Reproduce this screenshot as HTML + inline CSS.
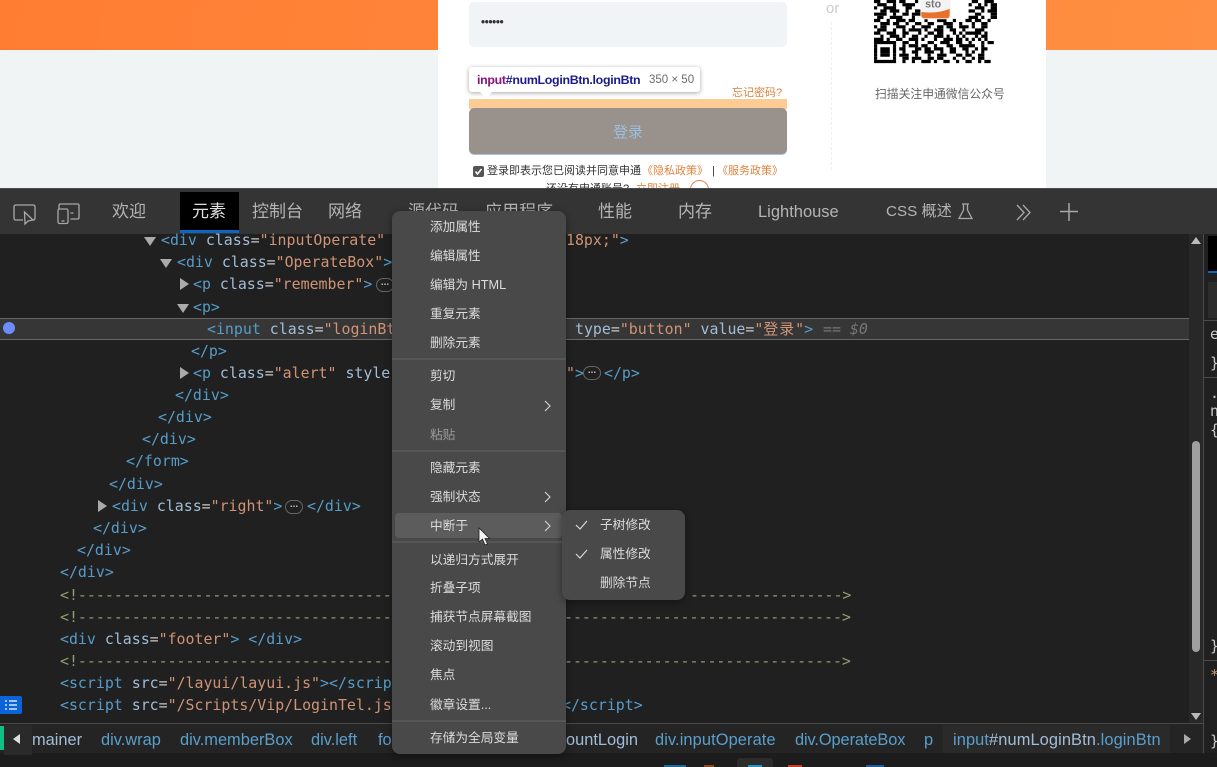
<!DOCTYPE html>
<html><head><meta charset="utf-8">
<style>
html,body{margin:0;padding:0}
body{width:1217px;height:767px;overflow:hidden;position:relative;background:#f1f4f5;font-family:"Liberation Sans","Noto Sans CJK SC",sans-serif}
div,span.a{box-sizing:border-box}
.p{position:absolute;white-space:nowrap}
.r{position:absolute;white-space:pre;font-family:"DejaVu Sans Mono",monospace;font-size:14.9px;line-height:22px;color:#579cc9;height:22px}
.n{color:#a2bdd8}.v{color:#cf9476}.c{color:#8e9e72}.g{color:#c8c8c8}
.t{position:absolute;top:199px;font-size:17px;line-height:26px;color:#b4b4b4;white-space:nowrap}
.m{position:absolute;left:430px;font-size:12.7px;line-height:20px;color:#dcdcdc;white-space:nowrap;margin-top:1px}
.s{position:absolute;left:600px;font-size:12.7px;line-height:20px;color:#dcdcdc;white-space:nowrap;margin-top:1px}
.b{position:absolute;top:728px;font-size:16.4px;line-height:24px;color:#5a9fcc;white-space:nowrap}
.sep{position:absolute;left:392px;width:174px;height:2px;background:#565656}
.ad{position:absolute;width:0;height:0}
.dn{border-left:6px solid transparent;border-right:6px solid transparent;border-top:9px solid #aaa}
.rt{border-top:6px solid transparent;border-bottom:6px solid transparent;border-left:9px solid #aaa}
.dots{position:absolute;width:18px;height:14px;border:1px solid #666;border-radius:7px;color:#bbb;font:bold 10px/8px "Liberation Sans",sans-serif;text-align:center;letter-spacing:0}
</style></head><body>

<!-- page -->
<div class="p" style="left:0;top:0;width:1217px;height:50px;background:linear-gradient(100deg,#ff7d33,#ff8f42)"></div>
<div class="p" style="left:438px;top:0;width:608px;height:190px;background:#fff"></div>
<div class="p" style="left:469px;top:2px;width:318px;height:45px;background:#f1f4f6;border-radius:5px"></div>
<div class="p" style="left:481px;top:17px;font-size:11.500px;line-height:13px;color:#333;font-weight:bold;letter-spacing:-.3px">••••••</div>
<div class="p" style="left:826px;top:0;font-size:15px;line-height:17px;color:#ccc">or</div>
<div class="p" style="left:831px;top:22px;width:1px;height:148px;border-left:1px dashed #efefef"></div>

<svg class="p" style="left:874px;top:0" width="123" height="64" viewBox="0 0 39 20.3">
<g stroke="#000" stroke-width="1.02" fill="none">
<path d="M0 .5h2m2 0h3m1 0h2m3 0h1m1 0h1M31 .5h2m2 0h3"/>
<path d="M1 1.5h3m2 0h1m2 0h4m2 0h1M30 1.5h1m2 0h1m1 0h1m1 0h2"/>
<path d="M0 2.5h1m2 0h4m3 0h2m3 0h1M32 2.5h3m2 0h2"/>
<path d="M2 3.5h2m1 0h3m2 0h1m2 0h3M30 3.5h2m2 0h1m1 0h3"/>
<path d="M0 4.5h4m2 0h1m2 0h2m1 0h3m1 0h1m15 0h2m3 0h2"/>
<path d="M1 5.5h2m2 0h4m3 0h1m3 0h2m3 0h1M30 5.5h3m1 0h1m2 0h2"/>
<path d="M0 6.5h2m2 0h1m2 0h3m1 0h2m3 0h1m3 0h3m2 0h1m3 0h2m1 0h2m2 0h1"/>
<path d="M2 7.5h3m1 0h2m2 0h1m2 0h2m2 0h2m3 0h3m2 0h1m3 0h1m2 0h2"/>
<path d="M0 8.5h1m1 0h2m3 0h3m2 0h1m2 0h3m2 0h2m1 0h2m2 0h3m1 0h1m2 0h2"/>
<path d="M1 9.5h3m2 0h1m2 0h1m1 0h4m1 0h1m2 0h3m2 0h2m2 0h1m3 0h3"/>
<path d="M0 10.5h2m2 0h3m2 0h2m3 0h1m2 0h2m1 0h2m3 0h1m1 0h1m1 0h5m1 0h1"/>
<path d="M2 11.5h1m2 0h3m1 0h1m2 0h2m2 0h1m2 0h3m1 0h1m2 0h1m1 0h1m3 0h1m1 0h2"/>
<path d="M0 12.5h3m1 0h1m2 0h2m2 0h3m1 0h1m3 0h1m2 0h3m1 0h2m1 0h1m1 0h1m1 0h1m1 0h1"/>
<path d="M0 13.5h7m2 0h2m2 0h1m3 0h2m2 0h3m2 0h2m2 0h1m3 0h1m1 0h2"/>
<path d="M0 14.5h1m5 0h1m2 0h1m1 0h3m1 0h2m2 0h1m3 0h2m2 0h5m2 0h1"/>
<path d="M0 15.5h1m1 0h3m1 0h1m1 0h2m3 0h2m1 0h2m1 0h3m2 0h2m2 0h2m2 0h1m1 0h2"/>
<path d="M0 16.5h1m1 0h3m1 0h1m2 0h1m2 0h2m2 0h3m2 0h1m2 0h2m3 0h1m1 0h1m2 0h1"/>
<path d="M0 17.5h1m1 0h3m1 0h1m1 0h3m2 0h1m3 0h1m2 0h3m3 0h2m1 0h2m2 0h2"/>
<path d="M0 18.5h1m5 0h1m2 0h2m1 0h3m2 0h2m1 0h2m3 0h1m2 0h1m2 0h1m1 0h2"/>
<path d="M0 19.5h7m2 0h1m2 0h1m2 0h3m1 0h1m2 0h2m2 0h1m2 0h2m2 0h1m1 0h2"/>
</g>
<path d="M14.700 0h9.600v4.800q0 1.300-1.300 1.300h-7q-1.300 0-1.300-1.300z" fill="#f4f4f4"/>
<path d="M15 3.800q5 .6 9-1v1.900q0 1.100-1.100 1.100h-6.800q-1.100 0-1.100-1.100z" fill="#e8722c"/>
<text x="16.200" y="2.300" font-family="Liberation Sans" font-weight="bold" font-size="3.400" fill="#777">sto</text>
</svg>
<div class="p" style="left:875px;top:86px;font-size:11.800px;line-height:17px;color:#666">扫描关注申通微信公众号</div>

<!-- highlight -->
<div class="p" style="left:469px;top:99px;width:318px;height:10px;background:#fdcb94"></div>
<div class="p" style="left:469px;top:108px;width:318px;height:46px;background:#98918c;border-radius:5px;box-shadow:0 1px 0 #a6c4e8"></div>
<div class="p" style="left:613px;top:122px;font-size:15px;line-height:21px;color:#9dbfe0">登录</div>
<div class="p" style="left:469px;top:67px;width:231px;height:25px;background:#fff;border-radius:3px;box-shadow:0 1px 5px rgba(0,0,0,.35)"></div>
<div class="p" style="left:480px;top:92px;width:0;height:0;border-left:6px solid transparent;border-right:6px solid transparent;border-top:7px solid #fff"></div>
<div class="p" style="left:477px;top:71px;font-size:12.400px;line-height:18px;font-weight:bold;color:#1a1a8c;letter-spacing:-.31px"><span style="color:#881280">input</span>#numLoginBtn.loginBtn</div>
<div class="p" style="left:649px;top:71px;font-size:11.500px;line-height:18px;color:#6b6b6b">350 × 50</div>
<div class="p" style="left:732px;top:85px;font-size:11px;line-height:16px;color:#d9823f">忘记密码?</div>
<div class="p" style="left:473px;top:166px;width:11px;height:11px;background:#555;border-radius:2px"></div>
<svg class="p" style="left:473px;top:166px" width="11" height="11"><path d="M2.500 5.500l2 2.500 4-5" stroke="#fff" stroke-width="1.600" fill="none"/></svg>
<div class="p" style="left:487px;top:163px;font-size:11px;line-height:17px;color:#333">登录即表示您已阅读并同意申通</div>
<div class="p" style="left:642px;top:163px;font-size:11px;line-height:17px;color:#e0833f">《隐私政策》</div>
<div class="p" style="left:712px;top:163px;font-size:11px;line-height:17px;color:#333">|</div>
<div class="p" style="left:717px;top:163px;font-size:11px;line-height:17px;color:#e0833f">《服务政策》</div>
<div class="p" style="left:546px;top:181px;font-size:11px;line-height:17px;color:#333">还没有申通账号?</div>
<div class="p" style="left:636px;top:181px;font-size:11px;line-height:17px;color:#e0833f">立即注册</div>
<div class="p" style="left:690px;top:180px;width:19px;height:19px;border:1.500px solid #e0833f;border-radius:50%"></div>

<!-- devtools -->
<div class="p" style="left:0;top:188px;width:1217px;height:579px;background:#202020"></div>
<div class="p" style="left:0;top:188px;width:1217px;height:46px;background:#343434;border-top:1.500px solid #4a4a4a"></div>
<svg class="p" style="left:12px;top:202px" width="70" height="24" fill="none" stroke="#a8a8a8" stroke-width="1.300">
<path d="M11 18H4q-2 0-2-2V5q0-2 2-2h17q2 0 2 2v11q0 2-2 2h-1"/>
<path d="M12.500 10l.5 12 3-3 5-1z"/>
<path d="M47 7V3.500Q47 2 48.500 2h17Q67 2 67 3.500V15.500Q67 17 65.500 17h-7"/>
<rect x="46" y="7" width="10" height="14.500" rx="1.500"/>
<path d="M49.500 19h3M58.500 11h3"/>
</svg>
<div class="p" style="left:180px;top:192px;width:59px;height:39px;background:#000"></div>
<div class="p" style="left:180px;top:230px;width:59px;height:3px;background:#0a67c4"></div>
<div class="t" style="left:112px">欢迎</div>
<div class="t" style="left:192px;color:#e0e0e0">元素</div>
<div class="t" style="left:252px">控制台</div>
<div class="t" style="left:328px">网络</div>
<div class="t" style="left:408px">源代码</div>
<div class="t" style="left:485px">应用程序</div>
<div class="t" style="left:598px">性能</div>
<div class="t" style="left:678px">内存</div>
<div class="t" style="left:758px;font-size:16.500px">Lighthouse</div>
<div class="t" style="left:886px;font-size:15.200px">CSS 概述</div>
<svg class="p" style="left:956px;top:202px" width="140" height="20" fill="none" stroke="#a8a8a8" stroke-width="1.300">
<path d="M6 2h7M7.500 2v6L3 16.500h13L11.500 8V2"/>
<path d="M61 3l7 7.500-7 7.500M67 3l7 7.500-7 7.500"/>
<path d="M104 9.500h18M113 1v18" stroke-width="1.500"/>
</svg>

<!-- selected row -->
<div class="p" style="left:0;top:318px;width:1189px;height:22px;background:#363636;border-top:1px solid #666;border-bottom:1.500px solid #666"></div>
<div class="p" style="left:3px;top:322px;width:12px;height:12px;border-radius:50%;background:#6b8cff"></div>

<!-- code -->
<div class="ad dn" style="left:144px;top:237px"></div>
<div class="r" style="left:161px;top:229px">&lt;div <span class="n">class</span><span class="g">=</span><span class="v">"inputOperate"</span></div>
<div class="ad dn" style="left:160px;top:259px"></div>
<div class="r" style="left:177px;top:251px">&lt;div <span class="n">class</span><span class="g">=</span><span class="v">"OperateBox"</span>&gt;</div>
<div class="ad rt" style="left:180px;top:278px"></div>
<div class="r" style="left:193px;top:273px">&lt;p <span class="n">class</span><span class="g">=</span><span class="v">"remember"</span>&gt;</div>
<div class="dots" style="left:376px;top:278px">...</div>
<div class="ad dn" style="left:177px;top:304px"></div>
<div class="r" style="left:193px;top:296px">&lt;p&gt;</div>
<div class="r" style="left:207px;top:318px">&lt;input <span class="n">class</span><span class="g">=</span><span class="v">"loginBtn"</span></div>
<div class="r" style="left:191px;top:340px">&lt;/p&gt;</div>
<div class="ad rt" style="left:180px;top:367px"></div>
<div class="r" style="left:193px;top:362px">&lt;p <span class="n">class</span><span class="g">=</span><span class="v">"alert"</span> <span class="n">style</span></div>
<div class="r" style="left:175px;top:384px">&lt;/div&gt;</div>
<div class="r" style="left:158px;top:406px">&lt;/div&gt;</div>
<div class="r" style="left:142px;top:428px">&lt;/div&gt;</div>
<div class="r" style="left:126px;top:450px">&lt;/form&gt;</div>
<div class="r" style="left:109px;top:473px">&lt;/div&gt;</div>
<div class="ad rt" style="left:98px;top:500px"></div>
<div class="r" style="left:112px;top:495px">&lt;div <span class="n">class</span><span class="g">=</span><span class="v">"right"</span>&gt;</div>
<div class="dots" style="left:285px;top:500px">...</div>
<div class="r" style="left:307px;top:495px">&lt;/div&gt;</div>
<div class="r" style="left:93px;top:517px">&lt;/div&gt;</div>
<div class="r" style="left:77px;top:539px">&lt;/div&gt;</div>
<div class="r" style="left:60px;top:561px">&lt;/div&gt;</div>
<div class="r c" style="left:60px;top:584px;color:#8e9e72">&lt;!-----------------------------------</div>
<div class="r c" style="left:60px;top:606px;color:#8e9e72">&lt;!-----------------------------------</div>
<div class="r" style="left:60px;top:628px">&lt;div <span class="n">class</span><span class="g">=</span><span class="v">"footer"</span>&gt; &lt;/div&gt;</div>
<div class="r c" style="left:60px;top:650px;color:#8e9e72">&lt;!-----------------------------------</div>
<div class="r" style="left:60px;top:672px">&lt;script <span class="n">src</span><span class="g">=</span><span class="v">"/layui/layui.js"</span>&gt;&lt;/script&gt;</div>
<div class="r" style="left:60px;top:694px">&lt;script <span class="n">src</span><span class="g">=</span><span class="v">"/Scripts/Vip/LoginTel.js"</span></div>

<!-- code right of menu -->
<div class="r" style="left:566px;top:229px"><span class="v">18px;</span><span class="v">"</span>&gt;</div>
<div class="r" style="left:575px;top:318px"><span class="n">type</span><span class="g">=</span><span class="v">"button"</span> <span class="n">value</span><span class="g">=</span><span class="v">"<span style="letter-spacing:1px">登录</span>"</span>&gt;</div>
<div class="r" style="left:823px;top:318px;color:#777;font-style:italic">== $0</div>
<div class="r" style="left:566px;top:362px"><span class="v">"</span>&gt;</div>
<div class="dots" style="left:583px;top:366px">...</div>
<div class="r" style="left:604px;top:362px">&lt;/p&gt;</div>
<div class="r c" style="left:690px;top:584px;color:#8e9e72">-----------------&gt;</div>
<div class="r c" style="left:564px;top:606px;color:#8e9e72">-------------------------------&gt;</div>
<div class="r c" style="left:564px;top:650px;color:#8e9e72">-------------------------------&gt;</div>
<div class="r" style="left:562px;top:694px">&lt;/script&gt;</div>

<!-- scrollbar + right pane -->
<div class="p" style="left:1189px;top:234px;width:14px;height:489px;background:#282828"></div>
<div class="p" style="left:1191px;top:237px;width:0;height:0;border-left:5px solid transparent;border-right:5px solid transparent;border-bottom:7px solid #bbb"></div>
<div class="p" style="left:1191px;top:713px;width:0;height:0;border-left:5px solid transparent;border-right:5px solid transparent;border-top:7px solid #bbb"></div>
<div class="p" style="left:1192px;top:441px;width:8px;height:211px;background:#a0a0a0;border-radius:4px"></div>
<div class="p" style="left:1203px;top:234px;width:1px;height:519px;background:#4a4a4a"></div>
<div class="p" style="left:1208px;top:236px;width:9px;height:37px;background:#000;border-bottom:2px solid #0a67c4"></div>
<div class="p" style="left:1208px;top:282px;width:9px;height:36px;background:#2c2c2c"></div>
<div class="p" style="left:1204px;top:320px;width:13px;height:1px;background:#4c4c4c"></div>
<div class="p" style="left:1204px;top:377px;width:13px;height:1px;background:#4c4c4c"></div>
<div class="p" style="left:1204px;top:660px;width:13px;height:1px;background:#4c4c4c"></div>
<div class="r" style="left:1210px;top:323px;color:#c8c8c8">e</div>
<div class="r" style="left:1210px;top:352px;color:#c8c8c8">}</div>
<div class="r" style="left:1210px;top:382px;color:#c8c8c8">.</div>
<div class="r" style="left:1210px;top:400px;color:#c8c8c8">n</div>
<div class="r" style="left:1210px;top:419px;color:#c8c8c8">{</div>
<div class="r" style="left:1210px;top:635px;color:#c8c8c8">}</div>
<div class="r" style="left:1210px;top:664px;color:#c8a070">*</div>
<div class="r" style="left:1210px;top:730px;color:#c8c8c8">}</div>

<!-- breadcrumb -->
<div class="p" style="left:0;top:723px;width:1203px;height:30px;background:#242424;border-top:1.500px solid #4a4a4a"></div>
<div class="p" style="left:0;top:753px;width:1217px;height:14px;background:#1c1c1c"></div>
<div class="p" style="left:0;top:696px;width:22px;height:18px;background:#0a63d8;border-radius:0 2px 2px 0"></div>
<svg class="p" style="left:3px;top:699px" width="16" height="12" stroke="#fff" stroke-width="1.200"><path d="M2 2h2M6 2h8M2 6h2M6 6h8M2 10h2M6 10h8"/></svg>
<div class="p" style="left:0;top:726px;width:4px;height:24px;background:#0fc184"></div>
<div class="p" style="left:4px;top:725px;width:28px;height:30px;background:#2a2a2a"></div>
<div class="p" style="left:13px;top:734px;width:0;height:0;border-top:5px solid transparent;border-bottom:5px solid transparent;border-right:7px solid #ddd"></div>
<div class="b" style="left:32px;color:#a2bdd8">mainer</div>
<div class="b" style="left:101px">div.wrap</div>
<div class="b" style="left:180px">div.memberBox</div>
<div class="b" style="left:311px">div.left</div>
<div class="b" style="left:378px">fo</div>
<div class="b" style="left:566px;color:#a2bdd8">ountLogin</div>
<div class="b" style="left:655px;letter-spacing:.1px">div.inputOperate</div>
<div class="b" style="left:795px;letter-spacing:-.1px">div.OperateBox</div>
<div class="b" style="left:924px">p</div>
<div class="p" style="left:943px;top:725px;width:227px;height:28px;background:#2a2a2a"></div>
<div class="b" style="left:953px;letter-spacing:.1px">input<span style="color:#a2bdd8">#numLoginBtn</span>.loginBtn</div>
<div class="p" style="left:1184px;top:734px;width:0;height:0;border-top:5px solid transparent;border-bottom:5px solid transparent;border-left:7px solid #aaa"></div>

<!-- taskbar hints -->
<div class="p" style="left:737px;top:758px;width:36px;height:9px;background:#2c2c2c;border-radius:3px 3px 0 0"></div>
<div class="p" style="left:664px;top:765px;width:22px;height:2px;background:#1c6a96"></div>
<div class="p" style="left:704px;top:765px;width:10px;height:2px;background:#8a4a20"></div>
<div class="p" style="left:748px;top:765px;width:14px;height:2px;background:#2596be"></div>
<div class="p" style="left:788px;top:765px;width:14px;height:2px;background:#d03a20"></div>
<div class="p" style="left:866px;top:765px;width:18px;height:2px;background:#1d5c96"></div>

<!-- context menu -->
<div class="p" style="left:392px;top:211px;width:174px;height:543px;background:#494949;border-radius:8px;box-shadow:0 2px 8px rgba(0,0,0,.4)"></div>
<div class="sep" style="top:358px"></div>
<div class="sep" style="top:450px"></div>
<div class="sep" style="top:541px"></div>
<div class="sep" style="top:720px"></div>
<div class="p" style="left:395px;top:513px;width:167px;height:25px;background:#5c5c5c;border-radius:4px"></div>
<div class="m" style="top:216px">添加属性</div>
<div class="m" style="top:245px">编辑属性</div>
<div class="m" style="top:274px">编辑为 HTML</div>
<div class="m" style="top:303px">重复元素</div>
<div class="m" style="top:332px">删除元素</div>
<div class="m" style="top:365px">剪切</div>
<div class="m" style="top:394px">复制</div>
<div class="m" style="top:424px;color:#9a9a9a">粘贴</div>
<div class="m" style="top:457px">隐藏元素</div>
<div class="m" style="top:486px">强制状态</div>
<div class="m" style="top:515px">中断于</div>
<div class="m" style="top:549px">以递归方式展开</div>
<div class="m" style="top:577px">折叠子项</div>
<div class="m" style="top:606px">捕获节点屏幕截图</div>
<div class="m" style="top:635px">滚动到视图</div>
<div class="m" style="top:664px">焦点</div>
<div class="m" style="top:694px">徽章设置...</div>
<div class="m" style="top:727px">存储为全局变量</div>
<svg class="p" style="left:540px;top:395px" width="14" height="140" fill="none" stroke="#cfcfcf" stroke-width="1.200">
<path d="M5 6l5 5-5 5M5 97l5 5-5 5M5 126l5 5-5 5"/>
</svg>

<!-- submenu -->
<div class="p" style="left:562px;top:510px;width:123px;height:90px;background:#494949;border-radius:8px;box-shadow:0 2px 8px rgba(0,0,0,.4)"></div>
<div class="s" style="top:514px">子树修改</div>
<div class="s" style="top:543px">属性修改</div>
<div class="s" style="top:572px">删除节点</div>
<svg class="p" style="left:574px;top:518px" width="16" height="44" fill="none" stroke="#d8d8d8" stroke-width="1.200">
<path d="M2 7l4 4 7-8M2 36l4 4 7-8"/>
</svg>

<!-- cursor -->
<svg class="p" style="left:478px;top:527px" width="14" height="20"><path d="M1 1v14l3.500-3 2.500 6 2.500-1-2.500-5.500h4.500z" fill="#f4f4f4" stroke="#222" stroke-width=".8"/></svg>

</body></html>
